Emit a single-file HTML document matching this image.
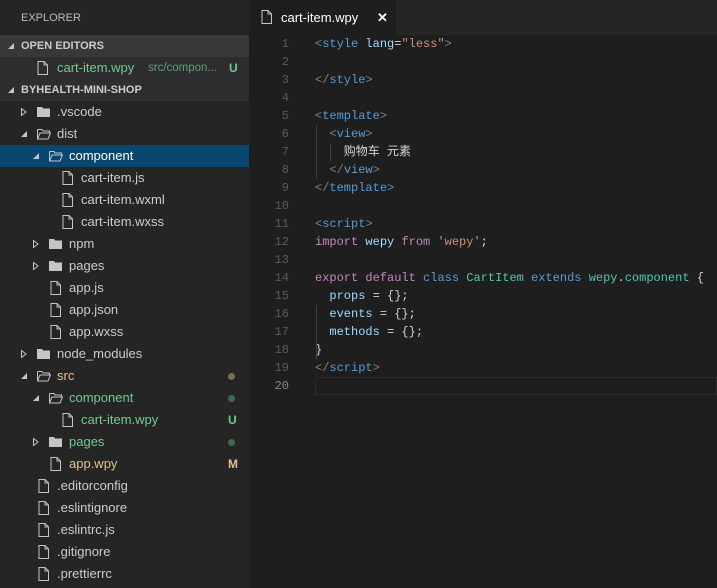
<!DOCTYPE html>
<html><head><meta charset="utf-8"><style>
*{margin:0;padding:0;box-sizing:border-box}
body{width:717px;height:588px;overflow:hidden;background:#1e1e1e;font-family:"Liberation Sans","Noto Sans CJK SC",sans-serif;position:relative}
#side{position:absolute;left:0;top:0;width:249px;height:588px;background:#252526}
.r{position:absolute;left:0;width:249px;height:22px;line-height:22px;font-size:13px;color:#cccccc;white-space:nowrap}
.r span.t{position:absolute;top:0}
.r svg{position:absolute}
.hdr{font-size:11px;font-weight:bold;color:#cccccc;background:#383838}
.g{color:#73c991}.y{color:#e2c08d}
.dot{position:absolute;width:7px;height:7px;border-radius:50%;top:8px;left:228px}
.bad{position:absolute;left:228px;font-weight:bold;font-size:12px}
#tabbar{position:absolute;left:249px;top:0;width:468px;height:35px;background:#252526}
#tab{position:absolute;left:0;top:0;width:147px;height:35px;background:#1e1e1e;color:#fff;font-size:13px;line-height:35px}
.ln{position:absolute;left:249px;width:40px;text-align:right;font-family:"Liberation Mono",monospace;font-size:12px;color:#5a5a5a;height:18px;line-height:18px}
.cd{position:absolute;left:315px;font-family:"Liberation Mono","Noto Sans CJK SC",monospace;font-size:12px;height:18px;line-height:18px;color:#d4d4d4;white-space:pre}
.p{color:#808080}.tg{color:#569cd6}.at{color:#9cdcfe}.s{color:#ce9178}.k{color:#c586c0}.c{color:#4ec9b0}.v{color:#9cdcfe}
.guide{position:absolute;width:1px;background:#404040}
</style></head><body>
<div id="side">
<div class="r" style="top:7px;font-size:11px;color:#bbbbbb"><span class="t" style="left:21px">EXPLORER</span></div>
<div class="r hdr" style="top:35px"><svg style="left:8px;top:8px" width="6" height="6"><path d="M6 0L6 6L0 6Z" fill="#c5c5c5"/></svg><span class="t" style="left:21px">OPEN EDITORS</span></div>
<div class="r" style="top:57px;background:#2d2d30"><svg style="left:37px;top:4px" width="11" height="14"><path d="M1 .5H7L10.5 4V13.5H1Z M7 .5V4H10.5" fill="none" stroke="#c5c5c5"/></svg><span class="t g" style="left:57px">cart-item.wpy</span><span class="t" style="left:148px;font-size:11.5px;color:#5f9e74">src/compon...</span><span class="bad g" style="left:229px">U</span></div>
<div class="r hdr" style="top:79px;background:#2e2e2f"><svg style="left:8px;top:8px" width="6" height="6"><path d="M6 0L6 6L0 6Z" fill="#c5c5c5"/></svg><span class="t" style="left:21px">BYHEALTH-MINI-SHOP</span></div>
<div id="tree"></div>
</div>
<div id="tabbar"><div id="tab"><svg style="position:absolute;left:12px;top:10px" width="11" height="14"><path d="M1 .5H7L10.5 4V13.5H1Z M7 .5V4H10.5" fill="none" stroke="#c5c5c5"/></svg><span style="position:absolute;left:32px">cart-item.wpy</span><span style="position:absolute;left:128px;font-size:13px;font-weight:bold">✕</span></div></div>
<div id="code"></div>
<div class="guide" style="left:316px;top:125px;height:54px"></div>
<div class="guide" style="left:330px;top:143px;height:18px"></div>
<div class="guide" style="left:316px;top:305px;height:54px"></div>
<div style="position:absolute;left:315px;top:377px;width:402px;height:18px;border:1px solid #2c2c2c"></div>
<script>
var F='<path d="M1 .5H7L10.5 4V13.5H1Z M7 .5V4H10.5" fill="none" stroke="#c5c5c5"/>';
var DC='<path d="M0 2H5L6 3.5H13V12H0Z" fill="#c5c5c5"/>';
var DO='<path d="M.5 2.5H5L6 4H12.5V6 M.5 12V2.5 M.5 12H11L13.5 6H3L.5 12Z" fill="none" stroke="#c5c5c5"/>';
var AE='<path d="M6 0L6 6L0 6Z" fill="#c5c5c5"/>';
var AC='<path d="M.5 .5L5 4L.5 7.5Z" fill="none" stroke="#c5c5c5"/>';
var rows=[
['.vscode',0,'c'],['dist',0,'o'],['component',1,'o','','',1],['cart-item.js',2,'f'],['cart-item.wxml',2,'f'],['cart-item.wxss',2,'f'],
['npm',1,'c'],['pages',1,'c'],['app.js',1,'f'],['app.json',1,'f'],['app.wxss',1,'f'],['node_modules',0,'c'],
['src',0,'o','y','dot:#7d6e54'],['component',1,'o','g','dot:#3f6b4c'],['cart-item.wpy',2,'f','g','U'],['pages',1,'c','g','dot:#3f6b4c'],['app.wpy',1,'f','y','M'],
['.editorconfig',0,'f'],['.eslintignore',0,'f'],['.eslintrc.js',0,'f'],['.gitignore',0,'f'],['.prettierrc',0,'f']];
var h='';
rows.forEach(function(r,i){
var top=101+i*22,o=r[1]*12,st=r[5]?'background:#094771;color:#fff':'';
h+='<div class="r" style="top:'+top+'px;'+st+'">';
if(r[2]!='f'){h+='<svg style="left:'+(21+o)+'px;top:'+(r[2]=='o'?8:7)+'px" width="7" height="8">'+(r[2]=='o'?AE:AC)+'</svg>';
h+='<svg style="left:'+(37+o)+'px;top:4px" width="14" height="14">'+(r[2]=='o'?DO:DC)+'</svg>';}
else h+='<svg style="left:'+(38+o)+'px;top:4px" width="11" height="14">'+F+'</svg>';
h+='<span class="t '+(r[3]||'')+'" style="left:'+(57+o)+'px">'+r[0]+'</span>';
if(r[4]){if(r[4].indexOf('dot:')==0)h+='<span class="dot" style="background:'+r[4].slice(4)+'"></span>';else h+='<span class="bad '+r[3]+'">'+r[4]+'</span>';}
h+='</div>';});
document.getElementById('tree').innerHTML=h;
var L=[
'<span class="p">&lt;</span><span class="tg">style</span> <span class="at">lang</span>=<span class="s">"less"</span><span class="p">&gt;</span>','',
'<span class="p">&lt;/</span><span class="tg">style</span><span class="p">&gt;</span>','',
'<span class="p">&lt;</span><span class="tg">template</span><span class="p">&gt;</span>',
'  <span class="p">&lt;</span><span class="tg">view</span><span class="p">&gt;</span>',
'    购物车 元素',
'  <span class="p">&lt;/</span><span class="tg">view</span><span class="p">&gt;</span>',
'<span class="p">&lt;/</span><span class="tg">template</span><span class="p">&gt;</span>','',
'<span class="p">&lt;</span><span class="tg">script</span><span class="p">&gt;</span>',
'<span class="k">import</span> <span class="v">wepy</span> <span class="k">from</span> <span class="s">\'wepy\'</span>;','',
'<span class="k">export</span> <span class="k">default</span> <span class="tg">class</span> <span class="c">CartItem</span> <span class="tg">extends</span> <span class="c">wepy</span>.<span class="c">component</span> {',
'  <span class="v">props</span> = {};','  <span class="v">events</span> = {};','  <span class="v">methods</span> = {};','}',
'<span class="p">&lt;/</span><span class="tg">script</span><span class="p">&gt;</span>',''];
var c='';L.forEach(function(s,i){var t=35+i*18;c+='<div class="ln" style="top:'+t+'px'+(i==19?';color:#858585':'')+'">'+(i+1)+'</div><div class="cd" style="top:'+t+'px">'+s+'</div>';});
document.getElementById('code').innerHTML=c;
</script>
</body></html>
